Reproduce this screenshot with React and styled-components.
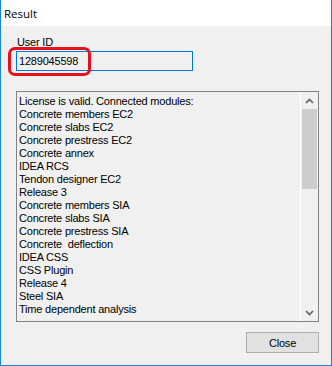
import React from "react";
import styled, { createGlobalStyle } from "styled-components";

const Global = createGlobalStyle`
  html, body {
    margin: 0;
    padding: 0;
    background: #ffffff;
  }
  body {
    font-family: "Liberation Sans", Arial, sans-serif;
    font-size: 11px;
    letter-spacing: -0.2px;
    color: #000;
  }
`;

const Window = styled.div`
  width: 332px;
  height: 366px;
  box-sizing: border-box;
  border: 1px solid #1883d7;
  border-top: none;
  display: flex;
  flex-direction: column;
  background: #f0f0f0;
  overflow: hidden;
`;

const TitleBar = styled.div`
  height: 26px;
  flex: none;
  background: #ffffff;
  display: flex;
  align-items: center;
  padding-left: 3px;
  font-family: "Open Sans", "Noto Sans", sans-serif;
  font-size: 11.5px;
  letter-spacing: 0;
  color: #000;
`;

const Body = styled.div`
  flex: 1;
  display: flex;
  flex-direction: column;
  padding: 9px 13px 0 15px;
`;

const Label = styled.div`
  line-height: 13px;
  height: 13px;
  margin-left: 1px;
  margin-top: 1px;
`;

const Field = styled.div`
  position: relative;
  margin-top: 2px;
  width: 177px;
  height: 20px;
  box-sizing: border-box;
  border: 1px solid #0078d7;
  background: #f0f0f0;
  display: flex;
  align-items: center;
  padding-left: 2px;
`;

const Highlight = styled.div`
  position: absolute;
  left: -9px;
  top: -5px;
  width: 83px;
  height: 29px;
  border: 3px solid #e8101a;
  border-radius: 7px;
  box-sizing: border-box;
  pointer-events: none;
`;

const ListBox = styled.div`
  margin-top: 20px;
  width: 303px;
  height: 231px;
  box-sizing: border-box;
  border: 1px solid #828282;
  background: #f0f0f0;
  display: flex;
`;

const Lines = styled.div`
  flex: 1;
  padding: 3px 0 0 2px;
  border-right: 1px solid #ffffff;
  overflow: hidden;
`;

const Line = styled.div`
  line-height: 13px;
  height: 13px;
  white-space: pre;
`;

const ScrollBar = styled.div`
  width: 17px;
  flex: none;
  display: flex;
  flex-direction: column;
  background: #f0f0f0;
`;

const Arrow = styled.div`
  height: 17px;
  flex: none;
  display: flex;
  align-items: center;
  justify-content: center;
`;

const Track = styled.div`
  flex: 1;
  padding: 0 1px;
`;

const Thumb = styled.div`
  height: 80px;
  background: #cdcdcd;
`;

const Footer = styled.div`
  display: flex;
  justify-content: flex-end;
  margin-top: 10px;
  width: 303px;
`;

const Button = styled.button`
  width: 73px;
  height: 21px;
  box-sizing: border-box;
  border: 1px solid #adadad;
  background: #e1e1e1;
  font-family: "Liberation Sans", Arial, sans-serif;
  font-size: 11px;
  letter-spacing: -0.2px;
  color: #000;
  padding: 0;
`;

const Chevron = ({ up }) => (
  <svg width="9" height="6" viewBox="0 0 9 6">
    <polyline
      points={up ? "1,5 4.5,1.5 8,5" : "1,1 4.5,4.5 8,1"}
      fill="none"
      stroke="#606060"
      strokeWidth="1.6"
    />
  </svg>
);

const modules = [
  "License is valid. Connected modules:",
  "Concrete members EC2",
  "Concrete slabs EC2",
  "Concrete prestress EC2",
  "Concrete annex",
  "IDEA RCS",
  "Tendon designer EC2",
  "Release 3",
  "Concrete members SIA",
  "Concrete slabs SIA",
  "Concrete prestress SIA",
  "Concrete  deflection",
  "IDEA CSS",
  "CSS Plugin",
  "Release 4",
  "Steel SIA",
  "Time dependent analysis",
];

const App = () => {
  return (
    <>
      <Global />
      <Window>
        <TitleBar>Result</TitleBar>
        <Body>
          <Label>User ID</Label>
          <Field>
            1289045598
            <Highlight />
          </Field>
          <ListBox>
            <Lines>
              {modules.map((m, i) => (
                <Line key={i}>{m}</Line>
              ))}
            </Lines>
            <ScrollBar>
              <Arrow>
                <Chevron up />
              </Arrow>
              <Track>
                <Thumb />
              </Track>
              <Arrow>
                <Chevron />
              </Arrow>
            </ScrollBar>
          </ListBox>
          <Footer>
            <Button>Close</Button>
          </Footer>
        </Body>
      </Window>
    </>
  );
};

export default App;
